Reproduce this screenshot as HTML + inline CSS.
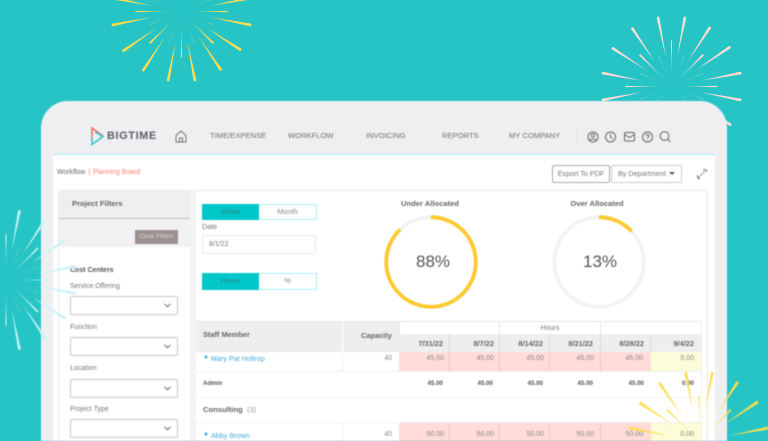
<!DOCTYPE html>
<html><head><meta charset="utf-8">
<style>
html,body{margin:0;padding:0;width:768px;height:441px;overflow:hidden}
body{background:#27c4c6;position:relative;font-family:"Liberation Sans",sans-serif}
.a{position:absolute;white-space:nowrap}
#card{position:absolute;left:0;top:0;width:768px;height:441px;overflow:hidden;filter:blur(.5px)}
.b{position:absolute}
.nav{position:absolute;top:131px;font-size:7.6px;color:#6f6f6f;white-space:nowrap}
.lab{position:absolute;left:70px;font-size:7px;color:#777;white-space:nowrap}
.sel{position:absolute;left:70px;width:106px;height:17px;border:1px solid #c6c6c6;border-radius:2px;background:#fff}
.sel svg{position:absolute;right:6px;top:6px}
.c{position:absolute;font-size:7px;color:#888;text-align:right;white-space:nowrap}
.h{position:absolute;font-size:7.4px;font-weight:bold;color:#666;white-space:nowrap}
.t{position:absolute;font-size:6.2px;font-weight:bold;color:#555;white-space:nowrap}
.pk{position:absolute;background:#ffdcd8;border-right:1px solid #ecc8c4}
.yl{position:absolute;background:#fbfdd8}
.hd{position:absolute;top:334px;height:17.5px;background:#eeeef0;border-right:1px solid #dcdcdf}
</style></head>
<body>
<svg width="0" height="0" style="position:absolute">
<defs>
<linearGradient id="gy" gradientUnits="userSpaceOnUse" x1="6" y1="0" x2="40" y2="0"><stop offset="0" stop-color="#ffdd4d" stop-opacity="0"/><stop offset="1" stop-color="#ffdd4d"/></linearGradient>
<linearGradient id="gp" gradientUnits="userSpaceOnUse" x1="6" y1="0" x2="40" y2="0"><stop offset="0" stop-color="#fcdcd4" stop-opacity="0"/><stop offset="1" stop-color="#fcdcd4"/></linearGradient>
<linearGradient id="gc" gradientUnits="userSpaceOnUse" x1="6" y1="0" x2="40" y2="0"><stop offset="0" stop-color="#c8f2f2" stop-opacity="0"/><stop offset="1" stop-color="#c8f2f2"/></linearGradient>
<g id="q">
<path d="M6 0L46 -.6L46 .6Z"/>
<path transform="rotate(11)" d="M30 0L69.8 -1.4A1.4 1.4 0 0 1 69.8 1.4Z"/>
<path transform="rotate(22.5)" opacity=".5" d="M6 0L34 -.4L34 .4Z"/>
<path transform="rotate(33)" d="M30 0L69.8 -1.4A1.4 1.4 0 0 1 69.8 1.4Z"/>
<path transform="rotate(45)" d="M6 0L45 -.9L45 .9Z"/>
<path transform="rotate(56)" d="M30 0L69.8 -1.4A1.4 1.4 0 0 1 69.8 1.4Z"/>
<path transform="rotate(67.5)" opacity=".5" d="M6 0L34 -.4L34 .4Z"/>
<path transform="rotate(79)" d="M30 0L69.8 -1.4A1.4 1.4 0 0 1 69.8 1.4Z"/>
</g>
<g id="fw"><use href="#q"/><use href="#q" transform="rotate(90)"/><use href="#q" transform="rotate(180)"/><use href="#q" transform="rotate(270)"/></g>
</defs>
</svg>

<!-- back fireworks -->
<svg class="b" style="left:0;top:0;filter:blur(.3px)" width="768" height="441">
<use href="#fw" transform="translate(181.5 11.5)" fill="url(#gy)"/>
<use href="#fw" transform="translate(671.5 86.5)" fill="url(#gp)"/>
</svg>

<div id="card">
<div class="b" style="left:41px;top:101px;width:686px;height:340px;background:#efeff2;border-radius:27px 27px 0 0"></div>
<div class="b" style="left:53px;top:154px;width:662px;height:286px;background:#fff;border-top:1px solid #a8eeee"></div>

<!-- logo -->
<svg class="b" style="left:90px;top:126px" width="16" height="21" viewBox="0 0 16 21" fill="none" stroke-width="1.6">
<path d="M2 11V2L13 10" stroke="#f0705f"/>
<path d="M2 11V18.5L13 10.5L5 6" stroke="#3cc4c9"/>
</svg>
<div class="a" style="left:107px;top:130px;font-size:10.8px;font-weight:bold;letter-spacing:.7px;color:#5c5f63">BIGTIME</div>
<svg class="b" style="left:175px;top:130px" width="12" height="13" viewBox="0 0 12 13" fill="none" stroke="#777" stroke-width="1"><path d="M1 12V5.5L6 1L11 5.5V12Z"/><path d="M4.5 12V8H7.5V12"/></svg>

<div class="nav" style="left:210px">TIME/EXPENSE</div>
<div class="nav" style="left:288px">WORKFLOW</div>
<div class="nav" style="left:366px">INVOICING</div>
<div class="nav" style="left:442px">REPORTS</div>
<div class="nav" style="left:509px">MY COMPANY</div>
<div class="b" style="left:577px;top:128px;width:1px;height:17px;background:#dcdcdc"></div>

<svg class="b" style="left:585px;top:129px" width="92" height="16" viewBox="0 0 92 16" fill="none" stroke="#666" stroke-width="1">
<circle cx="8" cy="8" r="5"/><circle cx="8" cy="6.5" r="1.7"/><path d="M4.6 11.5C5.5 9.5 10.5 9.5 11.4 11.5"/>
<circle cx="25.5" cy="8" r="5"/><path d="M25.5 4.8V8.3L27.8 9.6"/>
<rect x="39.5" y="3.5" width="10" height="8.5" rx="1.5"/><path d="M39.5 5.5L44.5 8.5L49.5 5.5"/>
<circle cx="62.5" cy="8" r="5"/><path d="M61 6.8C61 5 64 5 64 6.8C64 8 62.5 8 62.5 9.4M62.5 10.3V11"/>
<circle cx="79.5" cy="7" r="4.4"/><path d="M82.8 10.3L85.5 13"/>
</svg>

<!-- breadcrumb -->
<div class="a" style="left:57px;top:169px;font-size:6.9px;color:#666">Workflow</div>
<div class="a" style="left:88.5px;top:169px;font-size:6.9px;color:#f0705f">|</div>
<div class="a" style="left:93px;top:169px;font-size:6.9px;color:#fa7f6f">Planning Board</div>

<div class="b" style="left:552px;top:165px;width:56px;height:16px;border:1px solid #aaa;border-radius:2px;font-size:7.2px;color:#777;text-align:center;line-height:16px;white-space:nowrap">Export To PDF</div>
<div class="b" style="left:611px;top:165px;width:69px;height:16px;border:1px solid #ccc;border-radius:2px;font-size:7.2px;color:#777;line-height:16px;white-space:nowrap;text-indent:6px">By Department</div>
<div class="b" style="left:669px;top:172px;width:0;height:0;border-left:3px solid transparent;border-right:3px solid transparent;border-top:3px solid #555"></div>
<svg class="b" style="left:695px;top:167px" width="14" height="14" viewBox="0 0 14 14" fill="none" stroke="#777" stroke-width="1"><path d="M3 11L11 3M8 2.5H11.5V6M2.5 8V11.5H6" stroke-dasharray="2.5 1"/></svg>

<!-- main panel -->
<div class="b" style="left:58px;top:190px;width:648px;height:251px;border:1px solid #e8e8e8;border-bottom:0;border-radius:3px 3px 0 0;background:#fff;box-sizing:content-box"></div>
<div class="b" style="left:190px;top:191px;width:6px;height:250px;background:#f3f3f3"></div>

<!-- left panel -->
<div class="b" style="left:59px;top:191px;width:131px;height:27px;background:#efeff1;border-bottom:1px solid #bdbdbd"></div>
<div class="b" style="left:59px;top:219px;width:131px;height:28px;background:#f1f1f3"></div>
<div class="a" style="left:72px;top:199px;font-size:7.6px;font-weight:bold;color:#666">Project Filters</div>
<div class="b" style="left:135px;top:230px;width:43px;height:14px;background:#9b908f;color:#d8d4d4;font-size:6.4px;line-height:14px;text-align:center;white-space:nowrap">Clear Filters</div>
<div class="a" style="left:70px;top:267px;font-size:7px;font-weight:bold;color:#555">Cost Centers</div>
<div class="lab" style="top:283px">Service Offering</div>
<div class="sel" style="top:296px"><svg width="7" height="5" viewBox="0 0 7 5" fill="none" stroke="#666"><path d="M.5 .8L3.5 3.8L6.5 .8"/></svg></div>
<div class="lab" style="top:324px">Function</div>
<div class="sel" style="top:337px"><svg width="7" height="5" viewBox="0 0 7 5" fill="none" stroke="#666"><path d="M.5 .8L3.5 3.8L6.5 .8"/></svg></div>
<div class="lab" style="top:365px">Location</div>
<div class="sel" style="top:379px"><svg width="7" height="5" viewBox="0 0 7 5" fill="none" stroke="#666"><path d="M.5 .8L3.5 3.8L6.5 .8"/></svg></div>
<div class="lab" style="top:406px">Project Type</div>
<div class="sel" style="top:419px"><svg width="7" height="5" viewBox="0 0 7 5" fill="none" stroke="#666"><path d="M.5 .8L3.5 3.8L6.5 .8"/></svg></div>

<!-- toggles -->
<div class="b" style="left:202px;top:204px;width:113px;height:14px;border:1px solid #a8eeee"></div>
<div class="b" style="left:202px;top:204px;width:57px;height:15.5px;background:#00c8c8;color:#2b8587;font-size:7.4px;line-height:15.5px;text-align:center">Week</div>
<div class="a" style="left:259px;top:204px;width:57px;text-align:center;font-size:7.4px;line-height:15.5px;color:#888">Month</div>
<div class="a" style="left:202px;top:222px;font-size:7.2px;color:#777">Date</div>
<div class="b" style="left:202px;top:235px;width:112px;height:17px;border:1px solid #e9e9e9;border-radius:2px;font-size:7px;color:#777;line-height:18px;text-indent:6px">8/1/22</div>
<div class="b" style="left:202px;top:273px;width:113px;height:15px;border:1px solid #a8eeee"></div>
<div class="b" style="left:202px;top:273px;width:57px;height:16.5px;background:#00c8c8;color:#2b8587;font-size:7.4px;line-height:16px;text-align:center">Hours</div>
<div class="a" style="left:259px;top:273px;width:57px;text-align:center;font-size:7.4px;line-height:16px;color:#888">%</div>

<!-- donuts -->
<div class="a" style="left:370px;top:199px;width:120px;text-align:center;font-size:7.6px;font-weight:bold;color:#666">Under Allocated</div>
<div class="a" style="left:537px;top:199px;width:120px;text-align:center;font-size:7.6px;font-weight:bold;color:#666">Over Allocated</div>
<svg class="b" style="left:380px;top:210px" width="270" height="104" fill="none" stroke-width="3.8">
<circle cx="51" cy="52" r="44.8" stroke="#f1f4f4"/>
<circle cx="51" cy="52" r="44.8" stroke="#fdc92f" stroke-dasharray="247 300" transform="rotate(-90 51 52)"/>
<circle cx="219" cy="52" r="44.8" stroke="#f1f4f4"/>
<circle cx="219" cy="52" r="44.8" stroke="#fdc92f" stroke-dasharray="36.5 300" transform="rotate(-90 219 52)"/>
</svg>
<div class="a" style="left:373px;top:252px;width:120px;text-align:center;font-size:17px;color:#555">88%</div>
<div class="a" style="left:540px;top:252px;width:120px;text-align:center;font-size:17px;color:#555">13%</div>

<!-- table head -->
<div class="b" style="left:196px;top:321px;width:505px;height:1px;background:#e6e6e6"></div>
<div class="b" style="left:196px;top:322px;width:146px;height:29.5px;background:#eeeef0"></div>
<div class="b" style="left:343px;top:322px;width:56px;height:29.5px;background:#eeeef0"></div>
<div class="h" style="left:203px;top:330px">Staff Member</div>
<div class="h" style="left:361px;top:331px">Capacity</div>
<div class="b" style="left:399px;top:322px;width:1px;height:12px;background:#e6e6e6"></div>
<div class="b" style="left:499px;top:322px;width:1px;height:12px;background:#e6e6e6"></div>
<div class="b" style="left:600px;top:322px;width:1px;height:12px;background:#e6e6e6"></div>
<div class="b" style="left:701px;top:322px;width:1px;height:119px;background:#eee"></div>
<div class="a" style="left:500px;top:325px;width:100px;text-align:center;font-size:7px;color:#777">Hours</div>
<div class="hd" style="left:399px;width:50px"></div><div class="hd" style="left:450px;width:49px"></div><div class="hd" style="left:500px;width:49px"></div><div class="hd" style="left:550px;width:50px"></div><div class="hd" style="left:601px;width:49px"></div><div class="hd" style="left:651px;width:50px;border:0"></div>
<div class="h" style="left:417px;top:338.5px;width:26px;text-align:right">7/31/22</div>
<div class="h" style="left:467px;top:338.5px;width:27px;text-align:right">8/7/22</div>
<div class="h" style="left:517px;top:338.5px;width:26px;text-align:right">8/14/22</div>
<div class="h" style="left:567px;top:338.5px;width:26px;text-align:right">8/21/22</div>
<div class="h" style="left:618px;top:338.5px;width:26px;text-align:right">8/28/22</div>
<div class="h" style="left:668px;top:338.5px;width:26px;text-align:right">9/4/22</div>

<!-- rows -->
<div class="b" style="left:342px;top:352px;width:1px;height:19px;background:#eee"></div>
<div class="b" style="left:196px;top:371px;width:505px;height:1px;background:#efefef"></div>
<div class="b" style="left:196px;top:397px;width:505px;height:1px;background:#f0f0f0"></div>
<div class="b" style="left:196px;top:422px;width:505px;height:1px;background:#efefef"></div>
<div class="b" style="left:342px;top:423px;width:1px;height:18px;background:#eee"></div>

<div class="b" style="left:205px;top:355px;width:0;height:0;border-left:3.5px solid #1b9ad6;border-top:2.5px solid transparent;border-bottom:2.5px solid transparent"></div>
<div class="a" style="left:211px;top:354px;font-size:7.2px;color:#4aa8e0">Mary Pat Holtrop</div>
<div class="pk" style="left:399px;top:352px;width:50px;height:19px"></div><div class="pk" style="left:450px;top:352px;width:49px;height:19px"></div><div class="pk" style="left:500px;top:352px;width:49px;height:19px"></div><div class="pk" style="left:550px;top:352px;width:50px;height:19px"></div><div class="pk" style="left:601px;top:352px;width:50px;height:19px;border:0"></div><div class="yl" style="left:651px;top:352px;width:50px;height:19px"></div>
<div class="c" style="left:360px;top:355px;width:32px">40</div>
<div class="c" style="left:420px;top:355px;width:24px">45.00</div><div class="c" style="left:470px;top:355px;width:24px">45.00</div><div class="c" style="left:520px;top:355px;width:24px">45.00</div><div class="c" style="left:570px;top:355px;width:24px">45.00</div><div class="c" style="left:619px;top:355px;width:24px">45.00</div><div class="c" style="left:670px;top:355px;width:24px">0.00</div>

<div class="t" style="left:203px;top:380px">Admin</div>
<div class="t" style="left:420px;top:380px;width:23px;text-align:right">45.00</div><div class="t" style="left:470px;top:380px;width:23px;text-align:right">45.00</div><div class="t" style="left:520px;top:380px;width:23px;text-align:right">45.00</div><div class="t" style="left:570px;top:380px;width:23px;text-align:right">45.00</div><div class="t" style="left:621px;top:380px;width:23px;text-align:right">45.00</div><div class="t" style="left:671px;top:380px;width:23px;text-align:right">0.00</div>

<div class="a" style="left:203px;top:405px;font-size:7.6px;font-weight:bold;color:#666">Consulting</div>
<div class="a" style="left:247px;top:405px;font-size:7.2px;color:#999">(3)</div>

<div class="b" style="left:205px;top:432px;width:0;height:0;border-left:3.5px solid #1b9ad6;border-top:2.5px solid transparent;border-bottom:2.5px solid transparent"></div>
<div class="a" style="left:211px;top:431px;font-size:7.2px;color:#4aa8e0">Abby Brown</div>
<div class="pk" style="left:399px;top:423px;width:50px;height:18px"></div><div class="pk" style="left:450px;top:423px;width:49px;height:18px"></div><div class="pk" style="left:500px;top:423px;width:49px;height:18px"></div><div class="pk" style="left:550px;top:423px;width:50px;height:18px"></div><div class="pk" style="left:601px;top:423px;width:50px;height:18px;border:0"></div><div class="yl" style="left:651px;top:423px;width:50px;height:18px"></div>
<div class="c" style="left:360px;top:431px;width:32px">40</div>
<div class="c" style="left:420px;top:431px;width:24px">50.00</div><div class="c" style="left:470px;top:431px;width:24px">50.00</div><div class="c" style="left:520px;top:431px;width:24px">50.00</div><div class="c" style="left:570px;top:431px;width:24px">50.00</div><div class="c" style="left:619px;top:431px;width:24px">50.00</div><div class="c" style="left:670px;top:431px;width:24px">0.00</div>
</div>

<!-- front fireworks -->
<svg class="b" style="left:0;top:0;filter:blur(.4px)" width="768" height="441">
<use href="#fw" transform="translate(6 280)" fill="url(#gc)"/>
<use href="#fw" transform="translate(699 441.5)" fill="url(#gy)"/>
</svg>
</body></html>
